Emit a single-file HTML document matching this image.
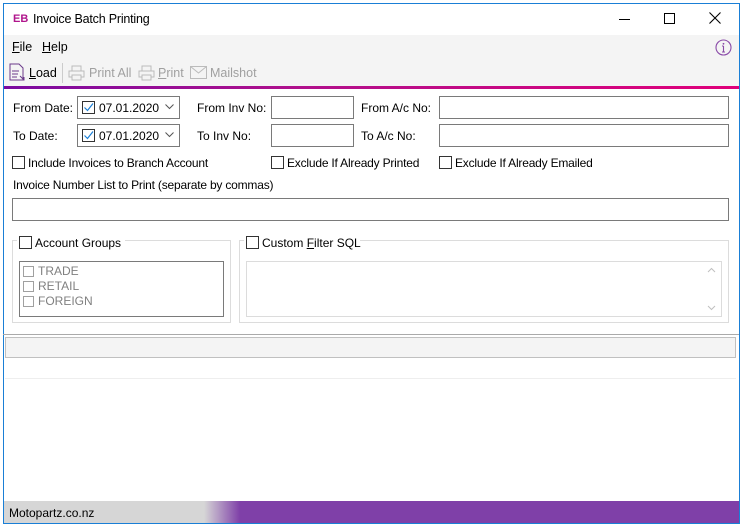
<!DOCTYPE html>
<html><head><meta charset="utf-8"><style>
*{margin:0;padding:0;box-sizing:border-box}
body{width:743px;height:527px;background:#fff;font-family:"Liberation Sans",sans-serif;font-size:12px;color:#000;position:relative;overflow:hidden}
.a{position:absolute}
.win{left:3px;top:3px;width:737px;height:521px;border:1px solid #1a7fd6;background:#fff}
.tb{background:#f4f4f4}
.cb{width:13px;height:13px;border:1px solid #333;background:#fff}
.in{border:1px solid #7a7a7a;background:#fff;height:23px}
.dis{color:#a0a0a0}
.grp{border:1px solid #dcdcdc}
.gc{width:11px;height:11px;border:1px solid #a0a0a0}
</style></head><body>
<div class="a win"></div>
<div class="a" style="left:13px;top:13px;font-weight:bold;font-size:11px;color:#b0158c">EB</div>
<div class="a" style="left:33px;top:12px;font-size:12.5px;letter-spacing:-0.2px">Invoice Batch Printing</div>
<div class="a" style="left:619px;top:19px;width:11px;height:1px;background:#000"></div>
<div class="a" style="left:664px;top:13px;width:11px;height:11px;border:1px solid #000"></div>
<svg class="a" style="left:709px;top:12px" width="12" height="12"><path d="M0.5 0.5L11.5 11.5M11.5 0.5L0.5 11.5" stroke="#000" stroke-width="1.1"/></svg>
<div class="a tb" style="left:4px;top:35px;width:735px;height:52px"></div>
<div class="a" style="left:12px;top:40px;font-size:12.5px"><u>F</u>ile</div>
<div class="a" style="left:42px;top:40px;font-size:12.5px"><u>H</u>elp</div>
<svg class="a" style="left:715px;top:39px" width="17" height="17"><circle cx="8.5" cy="8.5" r="7.5" fill="none" stroke="#8a4aa8" stroke-width="1.1"/><path d="M8.5 7v6M7 13h3M7 7h1.5" stroke="#8a4aa8" stroke-width="1.1" fill="none"/><circle cx="8.5" cy="4.8" r=".9" fill="#8a4aa8"/></svg>
<svg class="a" style="left:9px;top:63px" width="17" height="19"><path d="M1 1h9l4 4v12H1z" fill="none" stroke="#6b3a8a"/><path d="M3 8h7M3 11h6M3 14h5" stroke="#6b3a8a"/><path d="M11 13l4 4M15 14v3h-3" stroke="#6b3a8a" fill="none"/></svg>
<div class="a" style="left:29px;top:66px;font-size:12.5px"><u>L</u>oad</div>
<div class="a" style="left:62px;top:63px;width:1px;height:20px;background:#ccc"></div>
<svg class="a" style="left:68px;top:65px" width="17" height="16"><rect x="4" y="1" width="9" height="5" fill="none" stroke="#bbb"/><rect x="1" y="6" width="15" height="6" fill="none" stroke="#bbb"/><rect x="4" y="10" width="9" height="5" fill="#f4f4f4" stroke="#bbb"/></svg>
<div class="a dis" style="left:89px;top:66px;font-size:12.5px">Print All</div>
<svg class="a" style="left:138px;top:65px" width="17" height="16"><rect x="4" y="1" width="9" height="5" fill="none" stroke="#bbb"/><rect x="1" y="6" width="15" height="6" fill="none" stroke="#bbb"/><rect x="4" y="10" width="9" height="5" fill="#f4f4f4" stroke="#bbb"/></svg>
<div class="a dis" style="left:158px;top:66px;font-size:12.5px"><u>P</u>rint</div>
<svg class="a" style="left:190px;top:66px" width="17" height="13"><rect x=".5" y=".5" width="16" height="12" fill="none" stroke="#bbb"/><path d="M.5 .5L8.5 7L16.5 .5" fill="none" stroke="#bbb"/></svg>
<div class="a dis" style="left:210px;top:66px;font-size:12.5px">Mailshot</div>
<div class="a" style="left:4px;top:86px;width:735px;height:3px;background:linear-gradient(90deg,#7a0aa0,#b0108c 40%,#e0007a)"></div>
<div class="a" style="left:13px;top:101px">From Date:</div>
<div class="a in" style="left:77px;top:96px;width:103px"></div>
<div class="a cb" style="left:82px;top:101px"></div>
<svg class="a" style="left:83px;top:102px" width="11" height="11"><path d="M1.5 5.5l3 3 5.5-7" fill="none" stroke="#1a7fd6" stroke-width="1.2"/></svg>
<div class="a" style="left:99px;top:101px">07.01.2020</div>
<svg class="a" style="left:165px;top:104px" width="9" height="6"><path d="M.5 .5l4 4 4-4" fill="none" stroke="#555"/></svg>
<div class="a" style="left:13px;top:129px">To Date:</div>
<div class="a in" style="left:77px;top:124px;width:103px"></div>
<div class="a cb" style="left:82px;top:129px"></div>
<svg class="a" style="left:83px;top:130px" width="11" height="11"><path d="M1.5 5.5l3 3 5.5-7" fill="none" stroke="#1a7fd6" stroke-width="1.2"/></svg>
<div class="a" style="left:99px;top:129px">07.01.2020</div>
<svg class="a" style="left:165px;top:132px" width="9" height="6"><path d="M.5 .5l4 4 4-4" fill="none" stroke="#555"/></svg>
<div class="a" style="left:197px;top:101px">From Inv No:</div>
<div class="a in" style="left:271px;top:96px;width:83px"></div>
<div class="a" style="left:197px;top:129px">To Inv No:</div>
<div class="a in" style="left:271px;top:124px;width:83px"></div>
<div class="a" style="left:361px;top:101px">From A/c No:</div>
<div class="a in" style="left:439px;top:96px;width:290px"></div>
<div class="a" style="left:361px;top:129px">To A/c No:</div>
<div class="a in" style="left:439px;top:124px;width:290px"></div>
<div class="a cb" style="left:12px;top:156px"></div>
<div class="a" style="left:28px;top:156px;letter-spacing:-0.2px">Include Invoices to Branch Account</div>
<div class="a cb" style="left:271px;top:156px"></div>
<div class="a" style="left:287px;top:156px;letter-spacing:-0.2px">Exclude If Already Printed</div>
<div class="a cb" style="left:439px;top:156px"></div>
<div class="a" style="left:455px;top:156px;letter-spacing:-0.2px">Exclude If Already Emailed</div>
<div class="a" style="left:13px;top:178px;letter-spacing:-0.2px">Invoice Number List to Print (separate by commas)</div>
<div class="a in" style="left:12px;top:198px;width:717px"></div>
<div class="a grp" style="left:12px;top:240px;width:219px;height:83px"></div>
<div class="a" style="left:17px;top:234px;width:108px;height:14px;background:#fff"></div>
<div class="a cb" style="left:19px;top:236px"></div>
<div class="a" style="left:35px;top:236px">Account Groups</div>
<div class="a" style="left:19px;top:261px;width:205px;height:56px;border:1px solid #7a7a7a"></div>
<div class="a gc" style="left:23px;top:266px"></div><div class="a" style="left:38px;top:264px;color:#808080">TRADE</div>
<div class="a gc" style="left:23px;top:281px"></div><div class="a" style="left:38px;top:279px;color:#808080">RETAIL</div>
<div class="a gc" style="left:23px;top:296px"></div><div class="a" style="left:38px;top:294px;color:#808080">FOREIGN</div>
<div class="a grp" style="left:239px;top:240px;width:490px;height:83px"></div>
<div class="a" style="left:244px;top:234px;width:116px;height:14px;background:#fff"></div>
<div class="a cb" style="left:246px;top:236px"></div>
<div class="a" style="left:262px;top:236px">Custom <u>F</u>ilter SQL</div>
<div class="a" style="left:246px;top:261px;width:476px;height:56px;border:1px solid #dcdcdc"></div>
<svg class="a" style="left:707px;top:266px" width="9" height="46"><path d="M1 6l3.5-3.5L8 6M1 40l3.5 3.5L8 40" fill="none" stroke="#c0c0c0"/></svg>
<div class="a" style="left:3px;top:334px;width:736px;height:1px;background:#aaa"></div>
<div class="a" style="left:5px;top:337px;width:731px;height:21px;background:#f4f4f4;border:1px solid #c0c0c0"></div>
<div class="a" style="left:5px;top:378px;width:731px;height:1px;background:#eee"></div>
<div class="a" style="left:4px;top:501px;width:735px;height:22px;background:linear-gradient(90deg,#d6d6d6 0,#d6d6d6 200px,#7f40a8 236px,#7f40a8 100%)"></div>
<div class="a" style="left:9px;top:506px">Motopartz.co.nz</div>
</body></html>
